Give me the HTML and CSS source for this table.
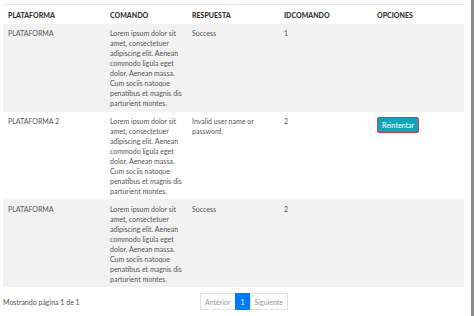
FILE: index.html
```html
<!DOCTYPE html>
<html lang="es">
<head>
<meta charset="utf-8">
<link rel="stylesheet" href="styles.css">
</head>
<body>
<div class="page">
  <div class="content">
    <table class="grid">
      <colgroup>
        <col class="c1"><col class="c2"><col class="c3"><col class="c4"><col class="c5">
      </colgroup>
      <thead>
        <tr><th>PLATAFORMA</th><th>COMANDO</th><th>RESPUESTA</th><th>IDCOMANDO</th><th>OPCIONES</th></tr>
      </thead>
      <tbody>
        <tr class="odd">
          <td>PLATAFORMA</td>
          <td>Lorem ipsum dolor sit amet, consectetuer adipiscing elit. Aenean commodo ligula eget dolor. Aenean massa. Cum sociis natoque penatibus et magnis dis parturient montes.</td>
          <td>Success</td>
          <td>1</td>
          <td></td>
        </tr>
        <tr>
          <td>PLATAFORMA 2</td>
          <td>Lorem ipsum dolor sit amet, consectetuer adipiscing elit. Aenean commodo ligula eget dolor. Aenean massa. Cum sociis natoque penatibus et magnis dis parturient montes.</td>
          <td>Invalid user name or password.</td>
          <td>2</td>
          <td><button class="retry">Reintentar</button></td>
        </tr>
        <tr class="odd">
          <td>PLATAFORMA</td>
          <td>Lorem ipsum dolor sit amet, consectetuer adipiscing elit. Aenean commodo ligula eget dolor. Aenean massa. Cum sociis natoque penatibus et magnis dis parturient montes.</td>
          <td>Success</td>
          <td>2</td>
          <td></td>
        </tr>
      </tbody>
    </table>
    <div class="footer">
      <div class="info">Mostrando página 1 de 1</div>
      <div class="pager">
        <span class="pg disabled">Anterior</span>
        <span class="pg active">1</span>
        <span class="pg disabled">Siguiente</span>
      </div>
    </div>
  </div>
  <div class="rail"></div>
</div>
</body>
</html>
```
FILE: styles.css
```css
html, body {
  margin: 0;
  padding: 0;
  background: #fff;
}
body {
  font-family: Lato, "Open Sans", sans-serif;
  font-size: 7px;
  color: #555;
}
.page {
  display: flex;
  height: 316px;
  overflow: hidden;
}
.content {
  flex: 1;
  padding: 4px 7px 0 3px;
}
.rail {
  width: 3px;
  background: #8a8a8a;
}
.grid {
  width: 461px;
  border-collapse: collapse;
  table-layout: fixed;
}
.c1 { width: 102px; }
.c2 { width: 82px; }
.c3 { width: 92px; }
.c4 { width: 93px; }
.c5 { width: 92px; }
.grid th {
  text-align: left;
  font-weight: 900;
  color: #333;
  padding: 5px 5px 4px;
  line-height: 10px;
  border-top: 1px solid #e6e6e6;
}
.grid td {
  vertical-align: top;
  padding: 4px 5px 3px;
  line-height: 10px;
  border-top: 1px solid #f4f4f4;
}
.grid tr.odd td {
  background: #f2f2f2;
}
.grid tbody tr:first-child td {
  border-top: 0;
}
.retry {
  font-family: inherit;
  font-size: 7px;
  color: #fff;
  background: #17a2b8;
  border: 1.5px solid #d2384a;
  border-radius: 2px;
  padding: 0 4px;
  height: 16px;
  line-height: 12px;
  margin-top: 1px;
  margin-left: 0;
}
.footer {
  display: flex;
  align-items: center;
  margin-top: 6px;
}
.info {
  width: 198px;
}
.pager {
  display: flex;
  height: 17px;
}
.pg {
  display: flex;
  align-items: center;
  padding: 0 4px;
  border: 1px solid #e3e3e3;
  margin-left: -1px;
}
.pg.disabled {
  color: #9a9a9a;
}
.pg.active {
  background: #007bff;
  border-color: #007bff;
  color: #fff;
  padding: 0 5px;
}
```
